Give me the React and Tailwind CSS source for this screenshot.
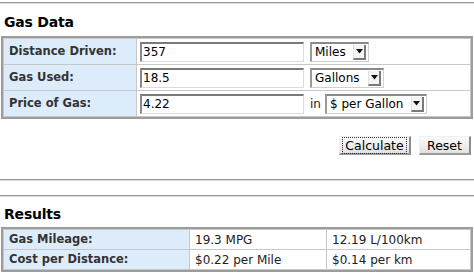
import React from "react";

const font = { fontFamily: '"DejaVu Sans", Verdana, sans-serif' };

function TextBox({ value, w }) {
  return (
    <div
      className={`h-[20px] ${w} bg-white border-t-2 border-l-2 border-b border-r border-t-[#7a7a7a] border-l-[#8a8a8a] border-b-[#dcdcdc] border-r-[#dcdcdc] flex items-center pl-[1px] text-[12px] text-black`}
    >
      {value}
    </div>
  );
}

function Select({ label, w }) {
  return (
    <div
      className={`h-[20px] ${w} bg-white border-t-2 border-l-2 border-b border-r border-t-[#8a8a8a] border-l-[#9a9a9a] border-b-[#d0d0d0] border-r-[#d0d0d0] flex items-center justify-between pl-[3px] pr-[2px] text-[12px] text-black`}
    >
      <span>{label}</span>
      <span className="w-[13px] h-[15px] bg-[#f4f4f4] border-r-2 border-b-2 border-r-[#7a7a7a] border-b-[#7a7a7a] border-l border-l-[#e0e0e0] flex items-center justify-center">
        <svg width="7" height="5" viewBox="0 0 7 5">
          <polygon points="0,0 7,0 3.5,4.5" fill="#111" />
        </svg>
      </span>
    </div>
  );
}

function Btn({ children, w, focus }) {
  return (
    <div
      className={`h-[19px] ${w} bg-gradient-to-b from-[#fbfbfb] to-[#e2e2e2] border-t border-l border-t-[#f0f0f0] border-l-[#f0f0f0] border-r-2 border-b-2 border-r-[#8c8c8c] border-b-[#9a9a9a] flex items-center justify-center text-[12.5px] text-black`}
    >
      <span className={focus ? "outline outline-1 outline-dotted outline-[#333] px-[2px] leading-[15px]" : "leading-[15px]"}>
        {children}
      </span>
    </div>
  );
}

export default function App() {
  const labelCell =
    "bg-[#ddecfb] font-bold text-[11.5px] text-[#333] pl-[5px] border border-[#c8c8c8] align-middle";
  const cell = "border border-[#c8c8c8] align-middle";
  return (
    <div className="w-[474px] h-[278px] bg-white overflow-hidden" style={font}>
      <div className="h-[2px]" />
      <div className="h-[1px] bg-[#9a9a9a]" />
      <div className="h-[1px] bg-[#dadada]" />
      <h2 className="mt-[8px] ml-[4px] text-[14px] font-bold text-black leading-[20px] tracking-[-0.2px]">
        Gas Data
      </h2>
      <div className="mt-[4px] ml-[1px] w-[472px] border-2 border-[#9c9c9c]">
        <table className="w-full border-collapse">
          <tbody>
            <tr className="h-[26px]">
              <td className={`${labelCell} w-[133px]`}>Distance Driven:</td>
              <td className={`${cell} pl-[3px]`}>
                <div className="flex items-center gap-[6px]">
                  <TextBox value="357" w="w-[164px]" />
                  <Select label="Miles" w="w-[59px]" />
                </div>
              </td>
            </tr>
            <tr className="h-[26px]">
              <td className={labelCell}>Gas Used:</td>
              <td className={`${cell} pl-[3px]`}>
                <div className="flex items-center gap-[6px]">
                  <TextBox value="18.5" w="w-[164px]" />
                  <Select label="Gallons" w="w-[74px]" />
                </div>
              </td>
            </tr>
            <tr className="h-[26px]">
              <td className={labelCell}>Price of Gas:</td>
              <td className={`${cell} pl-[3px]`}>
                <div className="flex items-center">
                  <TextBox value="4.22" w="w-[164px]" />
                  <span className="ml-[6px] mr-[4px] text-[12px] text-[#222]">in</span>
                  <Select label="$ per Gallon" w="w-[102px]" />
                </div>
              </td>
            </tr>
          </tbody>
        </table>
      </div>
      <div className="mt-[17px] flex justify-end gap-[8px] pr-[3px]">
        <Btn w="w-[72px]" focus>
          Calculate
        </Btn>
        <Btn w="w-[52px]">Reset</Btn>
      </div>
      <div className="mt-[24px] h-[1px] bg-[#9a9a9a]" />
      <div className="h-[1px] bg-[#dadada]" />
      <div className="mt-[14px] h-[1px] bg-[#9a9a9a]" />
      <div className="h-[1px] bg-[#dadada]" />
      <h2 className="mt-[7px] ml-[4px] text-[14px] font-bold text-black leading-[20px] tracking-[-0.2px]">
        Results
      </h2>
      <div className="mt-[3px] ml-[1px] w-[472px] border-2 border-[#9c9c9c]">
        <table className="w-full border-collapse">
          <tbody>
            <tr className="h-[20px]">
              <td className={`${labelCell} w-[186px]`}>Gas Mileage:</td>
              <td className={`${cell} w-[137px] pl-[5px] text-[12px] text-[#222]`}>19.3 MPG</td>
              <td className={`${cell} pl-[5px] text-[12px] text-[#222]`}>12.19 L/100km</td>
            </tr>
            <tr className="h-[20px]">
              <td className={labelCell}>Cost per Distance:</td>
              <td className={`${cell} pl-[5px] text-[12px] text-[#222]`}>$0.22 per Mile</td>
              <td className={`${cell} pl-[5px] text-[12px] text-[#222]`}>$0.14 per km</td>
            </tr>
          </tbody>
        </table>
      </div>
    </div>
  );
}
